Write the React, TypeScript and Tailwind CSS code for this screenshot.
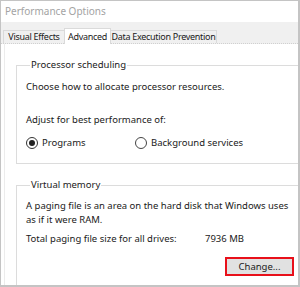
export default function App() {
  return (
    <div className="w-[300px] h-[287px] bg-white overflow-hidden flex flex-col border-t border-l border-r-2 border-b-2 border-[#c4c4c4] font-['Noto_Sans',sans-serif] text-[#1a1a1a]">
      <div className="shrink-0 h-[21px] pl-[4px] text-[10px] leading-[21px] text-[#a3a3a3]">Performance Options</div>
      <div className="shrink-0 h-[22px] bg-[#f0f0f0] border-b border-dotted border-[#d0d0d0] flex items-end pl-[2px] text-[9px] leading-[12px] tracking-[-0.3px]">
        <div className="w-[61px] h-[13px] border-l border-t border-[#dadada] flex items-center justify-center">Visual Effects</div>
        <div className="w-[47px] h-[16px] -mb-px bg-white border-l border-t border-r border-[#dadada] flex items-center justify-center">Advanced</div>
        <div className="w-[106px] h-[13px] border-t border-r border-[#dadada] flex items-center justify-center">Data Execution Prevention</div>
      </div>
      <div className="flex-1 min-h-0 ml-[3px] border-l border-[#ececec] pl-[11px] text-[9.5px] leading-[14px] whitespace-nowrap">
        <fieldset className="mt-[14px] w-[300px] border border-[#dcdcdc] pl-[9px] pb-[13px]">
          <legend className="ml-[4px] px-[1px] leading-[14px]">Processor scheduling</legend>
          <div className="pt-[8px]">Choose how to allocate processor resources.</div>
          <div className="mt-[19px]">Adjust for best performance of:</div>
          <div className="mt-[9px] flex items-center h-[14px]">
            <div className="w-[109px] flex items-center gap-[4px]">
              <span className="w-[12px] h-[12px] rounded-full border border-[#333] flex items-center justify-center">
                <span className="w-[6px] h-[6px] rounded-full bg-[#222]" />
              </span>
              <span>Programs</span>
            </div>
            <div className="flex items-center gap-[4px]">
              <span className="w-[12px] h-[12px] rounded-full border border-[#444]" />
              <span>Background services</span>
            </div>
          </div>
        </fieldset>
        <fieldset className="mt-[14px] w-[300px] h-[200px] border border-[#dcdcdc] pl-[9px]">
          <legend className="ml-[4px] px-[1px] leading-[14px]">Virtual memory</legend>
          <div className="pt-[7px]">
            A paging file is an area on the hard disk that Windows uses
            <br />
            as if it were RAM.
          </div>
          <div className="mt-[5px] flex">
            <span className="w-[179px]">Total paging file size for all drives:</span>
            <span>7936 MB</span>
          </div>
          <div className="mt-[11px] ml-[199px] w-[69px] h-[19px] border-2 border-[#e8101a] bg-[#e1e1e1] flex items-center justify-center">
            <span>Change...</span>
          </div>
        </fieldset>
      </div>
    </div>
  );
}
